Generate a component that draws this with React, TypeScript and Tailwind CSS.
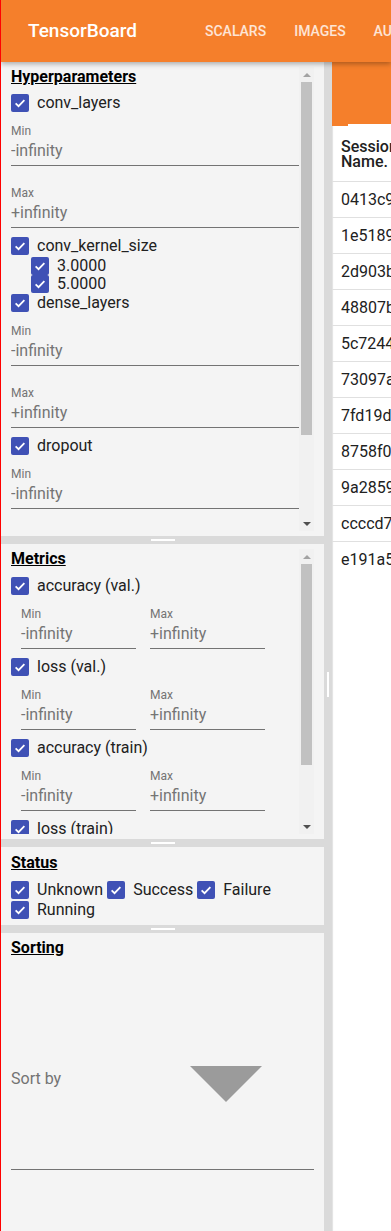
import React from "react";

function Cb() {
  return (
    <span className="flex h-[18px] w-[18px] shrink-0 items-center justify-center rounded-[2px] bg-[#3f51b5]">
      <svg width="14" height="14" viewBox="0 0 24 24">
        <path d="M4.5 12.5l5 5L19.5 7" fill="none" stroke="white" strokeWidth="3" />
      </svg>
    </span>
  );
}

function CbRow({ label, sub }: { label: string; sub?: boolean }) {
  return (
    <div className={sub ? "flex h-[18px] items-center pl-[20px]" : "flex h-[20px] items-center"}>
      <Cb />
      <span className="ml-[8px] whitespace-nowrap text-[16px] leading-[20px] text-[#212121]">{label}</span>
    </div>
  );
}

function Field({ label, value, className }: { label: string; value: string; className?: string }) {
  return (
    <div className={"border-b border-[#737373] pb-[2px] pt-[10px] " + (className ?? "")}>
      <div className="text-[12px] leading-[16px] text-[#737373]">{label}</div>
      <div className="text-[16px] leading-[24px] text-[#757575]">{value}</div>
    </div>
  );
}

function Scrollbar({ thumbTop, thumbHeight }: { thumbTop: number; thumbHeight: number }) {
  return (
    <div className="flex w-[15px] shrink-0 flex-col bg-[#f1f1f1]">
      <div className="flex h-[15px] items-center justify-center">
        <div className="h-0 w-0 border-b-[4px] border-l-[4px] border-r-[4px] border-b-[#a3a3a3] border-l-transparent border-r-transparent" />
      </div>
      <div className="flex-1 px-[2px]">
        <div className="bg-[#c1c1c1]" style={{ marginTop: thumbTop, height: thumbHeight }} />
      </div>
      <div className="flex h-[15px] items-center justify-center">
        <div className="h-0 w-0 border-l-[4px] border-r-[4px] border-t-[4px] border-l-transparent border-r-transparent border-t-[#505050]" />
      </div>
    </div>
  );
}

function Strip() {
  return (
    <div className="flex h-[8px] shrink-0 items-center justify-center">
      <div className="h-[2px] w-[24px] bg-white" />
    </div>
  );
}

function Title({ children }: { children: React.ReactNode }) {
  return <div className="text-[16px] font-bold leading-[18px] text-black underline">{children}</div>;
}

function MetricBlock({ label }: { label: string }) {
  return (
    <div className="mt-2">
      <CbRow label={label} />
      <div className="ml-[10px] flex gap-[14px]">
        <Field label="Min" value="-infinity" className="w-[115px]" />
        <Field label="Max" value="+infinity" className="w-[115px]" />
      </div>
    </div>
  );
}

const rows = [
  "0413c9d2e1",
  "1e5189a7b3",
  "2d903bc410",
  "48807b5e2f",
  "5c7244f0a1",
  "73097ae6d2",
  "7fd19d03b8",
  "8758f0c9e4",
  "9a2859d170",
  "ccccd7a3f5",
  "e191a5b6c2",
];

export default function App() {
  return (
    <div className="flex h-[1231px] flex-col overflow-hidden border-l border-[#ff0000] bg-[#dadada] font-[Roboto,'Liberation_Sans',sans-serif]">
      <header className="relative z-10 flex h-[62px] shrink-0 items-center overflow-hidden whitespace-nowrap bg-[#f57f2b] pl-[27px] shadow-[0_2px_5px_rgba(0,0,0,0.3)]">
        <div className="w-[177px] shrink-0 text-[19px] font-medium text-white">TensorBoard</div>
        <nav className="flex gap-[28px] text-[14px] font-medium text-white/80">
          <span>SCALARS</span>
          <span>IMAGES</span>
          <span>AUDIO</span>
        </nav>
      </header>
      <div className="flex min-h-0 flex-1">
        <aside className="flex w-[323px] shrink-0 flex-col">
          {/* Hyperparameters */}
          <section className="flex h-[474px] shrink-0 bg-[#f4f4f4] py-[5px] pl-[10px] pr-[10px]">
            <div className="min-w-0 flex-1 pt-[1px]">
              <div className="h-[447px] overflow-hidden">
                <Title>Hyperparameters</Title>
                <div className="mt-[7px]">
                  <CbRow label="conv_layers" />
                  <Field label="Min" value="-infinity" />
                  <Field label="Max" value="+infinity" className="mt-[9px]" />
                </div>
                <div className="mt-2">
                  <CbRow label="conv_kernel_size" />
                  <div className="mt-[1px]">
                    <CbRow label="3.0000" sub />
                    <CbRow label="5.0000" sub />
                  </div>
                </div>
                <div>
                  <CbRow label="dense_layers" />
                  <Field label="Min" value="-infinity" />
                  <Field label="Max" value="+infinity" className="mt-[9px]" />
                </div>
                <div className="mt-2">
                  <CbRow label="dropout" />
                  <Field label="Min" value="-infinity" />
                  <Field label="Max" value="+infinity" className="mt-[9px]" />
                </div>
              </div>
            </div>
            <Scrollbar thumbTop={0} thumbHeight={353} />
          </section>
          <Strip />
          {/* Metrics */}
          <section className="flex h-[295px] shrink-0 bg-[#f4f4f4] py-[5px] pl-[10px] pr-[10px]">
            <div className="min-w-0 flex-1 overflow-hidden pt-[1px]">
              <Title>Metrics</Title>
              <MetricBlock label="accuracy (val.)" />
              <MetricBlock label="loss (val.)" />
              <MetricBlock label="accuracy (train)" />
              <MetricBlock label="loss (train)" />
            </div>
            <Scrollbar thumbTop={0} thumbHeight={201} />
          </section>
          <Strip />
          {/* Status */}
          <section className="h-[78px] shrink-0 bg-[#f4f4f4] pl-[10px] pr-[10px] pt-[7px]">
            <Title>Status</Title>
            <div className="mt-2 flex flex-wrap gap-x-[4px]">
              <CbRow label="Unknown" />
              <CbRow label="Success" />
              <CbRow label="Failure" />
              <CbRow label="Running" />
            </div>
          </section>
          <Strip />
          {/* Sorting */}
          <section className="flex-1 bg-[#f4f4f4] pl-[10px] pr-[10px] pt-[6px]">
            <Title>Sorting</Title>
            <div className="mt-[109px] border-b border-[#737373] pb-[67px]">
              <div className="flex items-start">
                <div className="mt-[1px] w-[179px] shrink-0 text-[16px] leading-[24px] text-[#737373]">Sort by</div>
                <svg width="72" height="36" viewBox="0 0 72 36">
                  <polygon points="0,0 72,0 36,36" fill="#9b9b9b" />
                </svg>
              </div>
            </div>
          </section>
        </aside>
        <div className="flex w-[8px] shrink-0 flex-col items-center">
          <div className="mt-[610px] h-[25px] w-[2px] bg-white" />
        </div>
        <main className="min-w-0 flex-1 overflow-hidden bg-white shadow-[inset_1px_0_1px_rgba(0,0,0,0.12)]">
          <div className="flex h-[64px] flex-col justify-end bg-[#f57f2b]">
            <div className="ml-[16px] h-[2px] bg-white" />
          </div>
          <div className="flex h-[56px] items-center whitespace-nowrap border-b border-[#e0e0e0] pl-[9px] text-[16px] font-medium leading-[15px] text-[#212121]">
            <div>
              Session Group
              <br />
              Name.
            </div>
          </div>
          {rows.map((r, i) => (
            <div
              key={r}
              className={
                i === rows.length - 1
                  ? "flex h-[36px] items-center whitespace-nowrap pl-[9px] text-[16px] text-[#212121]"
                  : "flex h-[36px] items-center whitespace-nowrap border-b border-[#e0e0e0] pl-[9px] text-[16px] text-[#212121]"
              }
            >
              {r}
            </div>
          ))}
        </main>
      </div>
    </div>
  );
}
